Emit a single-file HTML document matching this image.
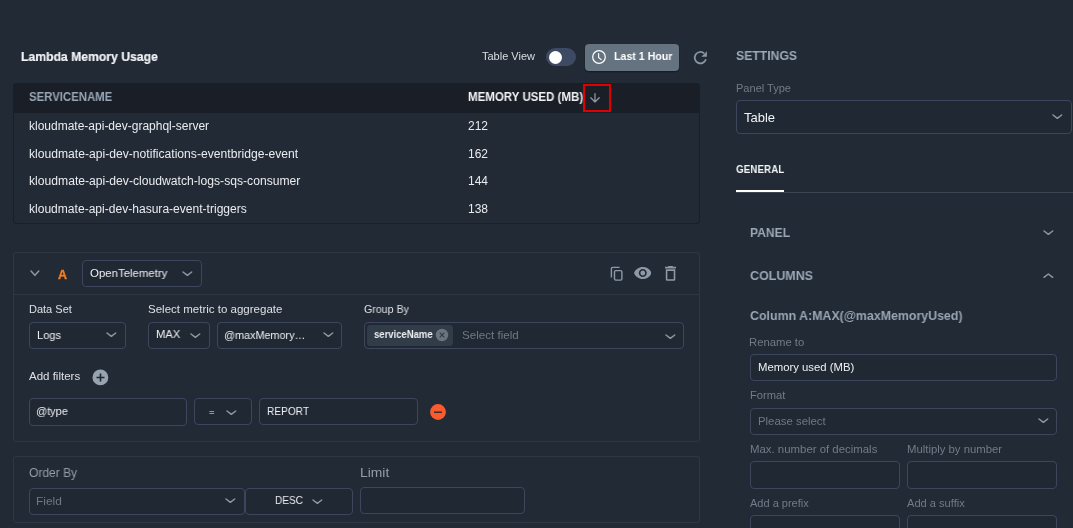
<!DOCTYPE html>
<html><head><meta charset="utf-8"><style>
html,body{-webkit-font-smoothing:antialiased;margin:0;padding:0;width:1073px;height:528px;overflow:hidden;background:#222a35;font-family:"Liberation Sans", sans-serif;}
</style></head><body>
<div style="position:absolute;left:21.38px;top:50.25px;font-size:13px;line-height:13px;font-weight:700;color:#f3f5f7;white-space:nowrap;will-change:transform;transform:scaleX(0.9376);transform-origin:0 0;-webkit-text-stroke:0.2px #f3f5f7;">Lambda Memory Usage</div><div style="position:absolute;left:481.95px;top:51.09px;font-size:11px;line-height:11px;font-weight:400;color:#dadee2;white-space:nowrap;will-change:transform;transform:scaleX(1.0004);transform-origin:0 0;">Table View</div><div style="position:absolute;left:546px;top:48px;width:30.00px;height:18.00px;box-sizing:border-box;background:#3e4a64;border-radius:9px"></div><div style="position:absolute;left:548.8px;top:50.8px;width:13.40px;height:13.40px;box-sizing:border-box;background:#ffffff;border-radius:50%"></div><div style="position:absolute;left:585px;top:44px;width:94.00px;height:27.00px;box-sizing:border-box;background:#65727f;border-radius:4px;box-shadow:0 1px 2px rgba(0,0,0,.4)"></div><svg style="position:absolute;left:591px;top:49px" width="16" height="16" viewBox="0 0 16 16" preserveAspectRatio="none"><circle cx="8" cy="8" r="6.3" fill="none" stroke="#fff" stroke-width="1.25"/><path d="M7.6 4.6 V8.4 L10.2 10.6" fill="none" stroke="#fff" stroke-width="1.15" stroke-linecap="round"/></svg><div style="position:absolute;left:614.19px;top:50.87px;font-size:11.5px;line-height:11.5px;font-weight:700;color:#ffffff;white-space:nowrap;will-change:transform;transform:scaleX(0.9242);transform-origin:0 0;">Last 1 Hour</div><svg style="position:absolute;left:692px;top:49px" width="17" height="17" viewBox="0 0 17 17" preserveAspectRatio="none"><path d="M12.2 4.4 A5.7 5.7 0 1 0 13.9 10.3" fill="none" stroke="#8a96a3" stroke-width="1.7"/><path d="M14.9 2.2 V7.7 H9.4 Z" fill="#8a96a3"/></svg><div style="position:absolute;left:13px;top:83px;width:687.00px;height:141.00px;box-sizing:border-box;border:1px solid #1a2029;border-top:none;border-radius:4px 4px 4px 4px;background:#222a35"></div><div style="position:absolute;left:13px;top:83px;width:687.00px;height:30.00px;box-sizing:border-box;background:#1a1f27;border-radius:4px 4px 0 0"></div><div style="position:absolute;left:28.87px;top:91.17px;font-size:12px;line-height:12px;font-weight:700;color:#99a6b5;white-space:nowrap;will-change:transform;transform:scaleX(0.9485);transform-origin:0 0;">SERVICENAME</div><div style="position:absolute;left:467.73px;top:91.17px;font-size:12px;line-height:12px;font-weight:700;color:#f0f2f4;white-space:nowrap;will-change:transform;transform:scaleX(0.9604);transform-origin:0 0;">MEMORY USED (MB)</div><div style="position:absolute;left:583px;top:84px;width:28.00px;height:28.00px;box-sizing:border-box;border:2px solid #e00000"></div><svg style="position:absolute;left:588px;top:90px" width="14" height="14" viewBox="0 0 14 14" preserveAspectRatio="none"><path d="M7 3.6 V12 M2.8 7.8 L7 12 L11.2 7.8" fill="none" stroke="#8a96a3" stroke-width="1.3" stroke-linecap="round" stroke-linejoin="round"/></svg><div style="position:absolute;left:28.79px;top:120.17px;font-size:12px;line-height:12px;font-weight:400;color:#eaecef;white-space:nowrap;will-change:transform;transform:scaleX(0.9995);transform-origin:0 0;">kloudmate-api-dev-graphql-server</div><div style="position:absolute;left:467.70px;top:120.17px;font-size:12px;line-height:12px;font-weight:400;color:#eaecef;white-space:nowrap;will-change:transform;">212</div><div style="position:absolute;left:28.78px;top:148.17px;font-size:12px;line-height:12px;font-weight:400;color:#eaecef;white-space:nowrap;will-change:transform;transform:scaleX(1.0111);transform-origin:0 0;">kloudmate-api-dev-notifications-eventbridge-event</div><div style="position:absolute;left:468.29px;top:148.17px;font-size:12px;line-height:12px;font-weight:400;color:#eaecef;white-space:nowrap;will-change:transform;">162</div><div style="position:absolute;left:28.78px;top:175.17px;font-size:12px;line-height:12px;font-weight:400;color:#eaecef;white-space:nowrap;will-change:transform;transform:scaleX(1.0123);transform-origin:0 0;">kloudmate-api-dev-cloudwatch-logs-sqs-consumer</div><div style="position:absolute;left:468.29px;top:175.17px;font-size:12px;line-height:12px;font-weight:400;color:#eaecef;white-space:nowrap;will-change:transform;">144</div><div style="position:absolute;left:28.79px;top:203.17px;font-size:12px;line-height:12px;font-weight:400;color:#eaecef;white-space:nowrap;will-change:transform;transform:scaleX(1.0049);transform-origin:0 0;">kloudmate-api-dev-hasura-event-triggers</div><div style="position:absolute;left:468.29px;top:203.17px;font-size:12px;line-height:12px;font-weight:400;color:#eaecef;white-space:nowrap;will-change:transform;">138</div><div style="position:absolute;left:13px;top:252px;width:687.00px;height:190.00px;box-sizing:border-box;border:1px solid #2e3744;border-radius:3px"></div><div style="position:absolute;left:14px;top:294px;width:685.00px;height:1.00px;box-sizing:border-box;background:#2e3744"></div><svg style="position:absolute;left:28.6px;top:269.42px" width="11.8" height="8.37" viewBox="0 0 11.80 8.37" preserveAspectRatio="none"><path d="M2 2 L5.9 6.368 L9.8 2" fill="none" stroke="#8c97a3" stroke-width="1.5" stroke-linecap="round" stroke-linejoin="round"/></svg><div style="position:absolute;left:57.69px;top:268.94px;font-size:12.5px;line-height:12.5px;font-weight:700;color:#f57c1f;white-space:nowrap;will-change:transform;-webkit-text-stroke:0.35px #f57c1f;">A</div><div style="position:absolute;left:82px;top:260px;width:120.00px;height:27.00px;box-sizing:border-box;border:1px solid #3e465e;border-radius:4px;background:#202833"></div><div style="position:absolute;left:89.66px;top:267.87px;font-size:11.5px;line-height:11.5px;font-weight:400;color:#eef0f2;white-space:nowrap;will-change:transform;transform:scaleX(0.9920);transform-origin:0 0;">OpenTelemetry</div><svg style="position:absolute;left:180.65px;top:269.75px" width="12.7" height="7.31" viewBox="0 0 12.70 7.31" preserveAspectRatio="none"><path d="M2 2 L6.35 5.305999999999999 L10.7 2" fill="none" stroke="#8c97a3" stroke-width="1.5" stroke-linecap="round" stroke-linejoin="round"/></svg><svg style="position:absolute;left:610px;top:266px" width="13" height="15" viewBox="0 0 13 15" preserveAspectRatio="none"><path d="M1.4 11.6 V2.6 Q1.4 1.4 2.6 1.4 H9.6" fill="none" stroke="#8d99a6" stroke-width="1.4"/><rect x="4.5" y="4.6" width="7.4" height="9.5" rx="1.3" fill="none" stroke="#8d99a6" stroke-width="1.4"/></svg><svg style="position:absolute;left:633.7px;top:267.2px" width="17.6" height="12" viewBox="1 4.5 22 15" preserveAspectRatio="none"><path fill="#8d99a6" d="M12 4.5C7 4.5 2.73 7.61 1 12c1.73 4.39 6 7.5 11 7.5s9.27-3.11 11-7.5c-1.73-4.39-6-7.5-11-7.5zM12 17c-2.76 0-5-2.240-5-5s2.24-5 5-5 5 2.24 5 5-2.24 5-5 5zm0-8c-1.66 0-3 1.34-3 3s1.34 3 3 3 3-1.34 3-3-1.34-3-3-3z"/></svg><svg style="position:absolute;left:665px;top:266.1px" width="11.1" height="14.8" viewBox="5 3 14 18" preserveAspectRatio="none"><path fill="#8d99a6" d="M6 19c0 1.1.9 2 2 2h8c1.1 0 2-.9 2-2V7H6v12zM8 9h8v10H8V9zm7.5-5l-1-1h-5l-1 1H5v2h14V4z"/></svg><div style="position:absolute;left:28.80px;top:304.09px;font-size:11px;line-height:11px;font-weight:400;color:#dde0e4;white-space:nowrap;will-change:transform;transform:scaleX(0.9945);transform-origin:0 0;">Data Set</div><div style="position:absolute;left:147.68px;top:304.09px;font-size:11px;line-height:11px;font-weight:400;color:#dde0e4;white-space:nowrap;will-change:transform;transform:scaleX(1.0469);transform-origin:0 0;">Select metric to aggregate</div><div style="position:absolute;left:363.87px;top:304.09px;font-size:11px;line-height:11px;font-weight:400;color:#dde0e4;white-space:nowrap;will-change:transform;transform:scaleX(0.9653);transform-origin:0 0;">Group By</div><div style="position:absolute;left:29px;top:322px;width:97.00px;height:27.00px;box-sizing:border-box;border:1px solid #3e465e;border-radius:4px;background:#202833"></div><div style="position:absolute;left:36.59px;top:329.87px;font-size:11.5px;line-height:11.5px;font-weight:400;color:#eef0f2;white-space:nowrap;will-change:transform;transform:scaleX(0.9627);transform-origin:0 0;">Logs</div><svg style="position:absolute;left:104.65px;top:330.75px" width="12.7" height="7.31" viewBox="0 0 12.70 7.31" preserveAspectRatio="none"><path d="M2 2 L6.35 5.305999999999999 L10.7 2" fill="none" stroke="#8c97a3" stroke-width="1.5" stroke-linecap="round" stroke-linejoin="round"/></svg><div style="position:absolute;left:148px;top:322px;width:62.00px;height:27.00px;box-sizing:border-box;border:1px solid #3e465e;border-radius:4px;background:#202833"></div><div style="position:absolute;left:156.28px;top:328.87px;font-size:11.5px;line-height:11.5px;font-weight:400;color:#eef0f2;white-space:nowrap;will-change:transform;transform:scaleX(0.9732);transform-origin:0 0;">MAX</div><svg style="position:absolute;left:188.65px;top:331.65px" width="12.7" height="7.31" viewBox="0 0 12.70 7.31" preserveAspectRatio="none"><path d="M2 2 L6.35 5.305999999999999 L10.7 2" fill="none" stroke="#8c97a3" stroke-width="1.5" stroke-linecap="round" stroke-linejoin="round"/></svg><div style="position:absolute;left:217px;top:322px;width:125.00px;height:27.00px;box-sizing:border-box;border:1px solid #3e465e;border-radius:4px;background:#202833"></div><div style="position:absolute;left:224.15px;top:329.87px;font-size:11.5px;line-height:11.5px;font-weight:400;color:#eef0f2;white-space:nowrap;will-change:transform;transform:scaleX(0.9408);transform-origin:0 0;">@maxMemory…</div><svg style="position:absolute;left:321.55px;top:330.65px" width="12.7" height="7.31" viewBox="0 0 12.70 7.31" preserveAspectRatio="none"><path d="M2 2 L6.35 5.305999999999999 L10.7 2" fill="none" stroke="#8c97a3" stroke-width="1.5" stroke-linecap="round" stroke-linejoin="round"/></svg><div style="position:absolute;left:364px;top:322px;width:320.00px;height:27.00px;box-sizing:border-box;border:1px solid #3e465e;border-radius:4px;background:#202833"></div><div style="position:absolute;left:367px;top:325px;width:86.00px;height:21.00px;box-sizing:border-box;background:#323b48;border-radius:3px"></div><div style="position:absolute;left:373.67px;top:329.29px;font-size:10.5px;line-height:10.5px;font-weight:700;color:#eef0f2;white-space:nowrap;will-change:transform;transform:scaleX(0.9051);transform-origin:0 0;">serviceName</div><svg style="position:absolute;left:435px;top:328px" width="14" height="14" viewBox="0 0 14 14" preserveAspectRatio="none"><circle cx="7" cy="7" r="6.2" fill="#6b7580"/><path d="M4.7 4.7 L9.3 9.3 M9.3 4.7 L4.7 9.3" stroke="#323b48" stroke-width="1.2"/></svg><div style="position:absolute;left:461.87px;top:329.87px;font-size:11.5px;line-height:11.5px;font-weight:400;color:#6e7985;white-space:nowrap;will-change:transform;transform:scaleX(1.0072);transform-origin:0 0;">Select field</div><svg style="position:absolute;left:663.55px;top:332.55px" width="12.7" height="7.31" viewBox="0 0 12.70 7.31" preserveAspectRatio="none"><path d="M2 2 L6.35 5.305999999999999 L10.7 2" fill="none" stroke="#8c97a3" stroke-width="1.5" stroke-linecap="round" stroke-linejoin="round"/></svg><div style="position:absolute;left:28.98px;top:370.87px;font-size:11.5px;line-height:11.5px;font-weight:400;color:#dde0e4;white-space:nowrap;will-change:transform;transform:scaleX(0.9940);transform-origin:0 0;">Add filters</div><svg style="position:absolute;left:92px;top:369px" width="17" height="17" viewBox="0 0 17 17" preserveAspectRatio="none"><circle cx="8.4" cy="8.4" r="7.9" fill="#97a3af"/><path d="M8.5 4.5 V12.5 M4.5 8.5 H12.5" stroke="#1f2731" stroke-width="1.6"/></svg><div style="position:absolute;left:29px;top:398px;width:158.00px;height:28.00px;box-sizing:border-box;border:1px solid #3e465e;border-radius:4px;background:#202833"></div><div style="position:absolute;left:36.04px;top:405.87px;font-size:11.5px;line-height:11.5px;font-weight:400;color:#eef0f2;white-space:nowrap;will-change:transform;transform:scaleX(0.9560);transform-origin:0 0;">@type</div><div style="position:absolute;left:194px;top:398px;width:58.00px;height:27.00px;box-sizing:border-box;border:1px solid #3e465e;border-radius:4px;background:#202833"></div><div style="position:absolute;left:208.84px;top:407.21px;font-size:9.5px;line-height:9.5px;font-weight:400;color:#f0f2f4;white-space:nowrap;will-change:transform;">=</div><svg style="position:absolute;left:224.65px;top:408.55px" width="12.7" height="7.31" viewBox="0 0 12.70 7.31" preserveAspectRatio="none"><path d="M2 2 L6.35 5.305999999999999 L10.7 2" fill="none" stroke="#8c97a3" stroke-width="1.5" stroke-linecap="round" stroke-linejoin="round"/></svg><div style="position:absolute;left:259px;top:398px;width:159.00px;height:27.00px;box-sizing:border-box;border:1px solid #3e465e;border-radius:4px;background:#202833"></div><div style="position:absolute;left:266.57px;top:405.87px;font-size:11.5px;line-height:11.5px;font-weight:400;color:#eef0f2;white-space:nowrap;will-change:transform;transform:scaleX(0.8815);transform-origin:0 0;">REPORT</div><svg style="position:absolute;left:430.3px;top:404.3px" width="16" height="16" viewBox="0 0 16 16" preserveAspectRatio="none"><circle cx="8" cy="8" r="7.95" fill="#fb5a2d"/><path d="M4 8.2 H12" stroke="#222a35" stroke-width="1.4"/></svg><div style="position:absolute;left:13px;top:456px;width:687.00px;height:67.00px;box-sizing:border-box;border:1px solid #2e3744;border-radius:3px"></div><div style="position:absolute;left:28.93px;top:466.94px;font-size:12.5px;line-height:12.5px;font-weight:400;color:#939da8;white-space:nowrap;will-change:transform;transform:scaleX(0.9616);transform-origin:0 0;">Order By</div><div style="position:absolute;left:359.66px;top:466.94px;font-size:12.5px;line-height:12.5px;font-weight:400;color:#939da8;white-space:nowrap;will-change:transform;transform:scaleX(1.1072);transform-origin:0 0;">Limit</div><div style="position:absolute;left:29px;top:488px;width:216.00px;height:27.00px;box-sizing:border-box;border:1px solid #3e465e;border-radius:4px;background:#202833"></div><div style="position:absolute;left:36.33px;top:495.87px;font-size:11.5px;line-height:11.5px;font-weight:400;color:#6e7985;white-space:nowrap;will-change:transform;transform:scaleX(1.0321);transform-origin:0 0;">Field</div><svg style="position:absolute;left:223.55px;top:496.55px" width="12.7" height="7.31" viewBox="0 0 12.70 7.31" preserveAspectRatio="none"><path d="M2 2 L6.35 5.305999999999999 L10.7 2" fill="none" stroke="#8c97a3" stroke-width="1.5" stroke-linecap="round" stroke-linejoin="round"/></svg><div style="position:absolute;left:245px;top:488px;width:108.00px;height:27.00px;box-sizing:border-box;border:1px solid #3e465e;border-radius:4px;background:#202833"></div><div style="position:absolute;left:275.37px;top:495.09px;font-size:11px;line-height:11px;font-weight:400;color:#eceef0;white-space:nowrap;will-change:transform;transform:scaleX(0.9165);transform-origin:0 0;">DESC</div><svg style="position:absolute;left:310.55px;top:497.75px" width="12.7" height="7.31" viewBox="0 0 12.70 7.31" preserveAspectRatio="none"><path d="M2 2 L6.35 5.305999999999999 L10.7 2" fill="none" stroke="#8c97a3" stroke-width="1.5" stroke-linecap="round" stroke-linejoin="round"/></svg><div style="position:absolute;left:360px;top:487px;width:165.00px;height:27.00px;box-sizing:border-box;border:1px solid #3e465e;border-radius:4px;background:#202833"></div><div style="position:absolute;left:736.05px;top:49.25px;font-size:13px;line-height:13px;font-weight:700;color:#9eaab7;white-space:nowrap;will-change:transform;transform:scaleX(0.9402);transform-origin:0 0;">SETTINGS</div><div style="position:absolute;left:735.90px;top:83.09px;font-size:11px;line-height:11px;font-weight:400;color:#717c88;white-space:nowrap;will-change:transform;transform:scaleX(1.0028);transform-origin:0 0;">Panel Type</div><div style="position:absolute;left:736px;top:100px;width:336.00px;height:34.00px;box-sizing:border-box;border:1px solid #3e465e;border-radius:4px;background:#202833"></div><div style="position:absolute;left:744.41px;top:111.25px;font-size:13px;line-height:13px;font-weight:400;color:#f2f4f6;white-space:nowrap;will-change:transform;transform:scaleX(0.9964);transform-origin:0 0;">Table</div><svg style="position:absolute;left:1050.65px;top:112.75px" width="12.7" height="7.31" viewBox="0 0 12.70 7.31" preserveAspectRatio="none"><path d="M2 2 L6.35 5.305999999999999 L10.7 2" fill="none" stroke="#8c97a3" stroke-width="1.5" stroke-linecap="round" stroke-linejoin="round"/></svg><div style="position:absolute;left:735.79px;top:163.96px;font-size:11.3px;line-height:11.3px;font-weight:700;color:#f2f4f6;white-space:nowrap;will-change:transform;transform:scaleX(0.8746);transform-origin:0 0;">GENERAL</div><div style="position:absolute;left:736px;top:192px;width:337.00px;height:1.00px;box-sizing:border-box;background:#3a4453"></div><div style="position:absolute;left:736px;top:190px;width:48.00px;height:2.00px;box-sizing:border-box;background:#ffffff"></div><div style="position:absolute;left:749.79px;top:226.25px;font-size:13px;line-height:13px;font-weight:700;color:#9ca8b6;white-space:nowrap;will-change:transform;transform:scaleX(0.9297);transform-origin:0 0;">PANEL</div><svg style="position:absolute;left:1042.05px;top:228.75px" width="12.7" height="7.31" viewBox="0 0 12.70 7.31" preserveAspectRatio="none"><path d="M2 2 L6.35 5.305999999999999 L10.7 2" fill="none" stroke="#8c97a3" stroke-width="1.5" stroke-linecap="round" stroke-linejoin="round"/></svg><div style="position:absolute;left:750.09px;top:269.25px;font-size:13px;line-height:13px;font-weight:700;color:#9ca8b6;white-space:nowrap;will-change:transform;transform:scaleX(0.9586);transform-origin:0 0;">COLUMNS</div><svg style="position:absolute;left:1042.05px;top:272.35px" width="12.7" height="7.31" viewBox="0 0 12.70 7.31" preserveAspectRatio="none"><path d="M2 5.305999999999999 L6.35 2 L10.7 5.305999999999999" fill="none" stroke="#8c97a3" stroke-width="1.5" stroke-linecap="round" stroke-linejoin="round"/></svg><div style="position:absolute;left:750.09px;top:309.25px;font-size:13px;line-height:13px;font-weight:700;color:#9aa6b4;white-space:nowrap;will-change:transform;transform:scaleX(0.9526);transform-origin:0 0;">Column A:MAX(@maxMemoryUsed)</div><div style="position:absolute;left:749.07px;top:337.09px;font-size:11px;line-height:11px;font-weight:400;color:#717c88;white-space:nowrap;will-change:transform;transform:scaleX(1.0277);transform-origin:0 0;">Rename to</div><div style="position:absolute;left:750px;top:354px;width:307.00px;height:27.00px;box-sizing:border-box;border:1px solid #3e465e;border-radius:4px;background:#202833"></div><div style="position:absolute;left:757.67px;top:362.09px;font-size:11px;line-height:11px;font-weight:400;color:#eef0f2;white-space:nowrap;will-change:transform;transform:scaleX(1.0299);transform-origin:0 0;">Memory used (MB)</div><div style="position:absolute;left:749.88px;top:390.09px;font-size:11px;line-height:11px;font-weight:400;color:#717c88;white-space:nowrap;will-change:transform;transform:scaleX(1.0159);transform-origin:0 0;">Format</div><div style="position:absolute;left:750px;top:408px;width:307.00px;height:27.00px;box-sizing:border-box;border:1px solid #3e465e;border-radius:4px;background:#202833"></div><div style="position:absolute;left:757.67px;top:416.09px;font-size:11px;line-height:11px;font-weight:400;color:#6e7985;white-space:nowrap;will-change:transform;transform:scaleX(1.0348);transform-origin:0 0;">Please select</div><svg style="position:absolute;left:1036.55px;top:416.75px" width="12.7" height="7.31" viewBox="0 0 12.70 7.31" preserveAspectRatio="none"><path d="M2 2 L6.35 5.305999999999999 L10.7 2" fill="none" stroke="#8c97a3" stroke-width="1.5" stroke-linecap="round" stroke-linejoin="round"/></svg><div style="position:absolute;left:749.86px;top:444.09px;font-size:11px;line-height:11px;font-weight:400;color:#717c88;white-space:nowrap;will-change:transform;transform:scaleX(1.0363);transform-origin:0 0;">Max. number of decimals</div><div style="position:absolute;left:907.27px;top:444.09px;font-size:11px;line-height:11px;font-weight:400;color:#717c88;white-space:nowrap;will-change:transform;transform:scaleX(1.0302);transform-origin:0 0;">Multiply by number</div><div style="position:absolute;left:750px;top:461px;width:150.00px;height:28.00px;box-sizing:border-box;border:1px solid #3e465e;border-radius:4px;background:#202833"></div><div style="position:absolute;left:907px;top:461px;width:150.00px;height:28.00px;box-sizing:border-box;border:1px solid #3e465e;border-radius:4px;background:#202833"></div><div style="position:absolute;left:749.98px;top:498.09px;font-size:11px;line-height:11px;font-weight:400;color:#717c88;white-space:nowrap;will-change:transform;transform:scaleX(0.9972);transform-origin:0 0;">Add a prefix</div><div style="position:absolute;left:907.38px;top:498.09px;font-size:11px;line-height:11px;font-weight:400;color:#717c88;white-space:nowrap;will-change:transform;transform:scaleX(1.0080);transform-origin:0 0;">Add a suffix</div><div style="position:absolute;left:750px;top:515px;width:150.00px;height:30.00px;box-sizing:border-box;border:1px solid #3e465e;border-radius:4px;background:#202833"></div><div style="position:absolute;left:907px;top:515px;width:150.00px;height:30.00px;box-sizing:border-box;border:1px solid #3e465e;border-radius:4px;background:#202833"></div>
</body></html>
